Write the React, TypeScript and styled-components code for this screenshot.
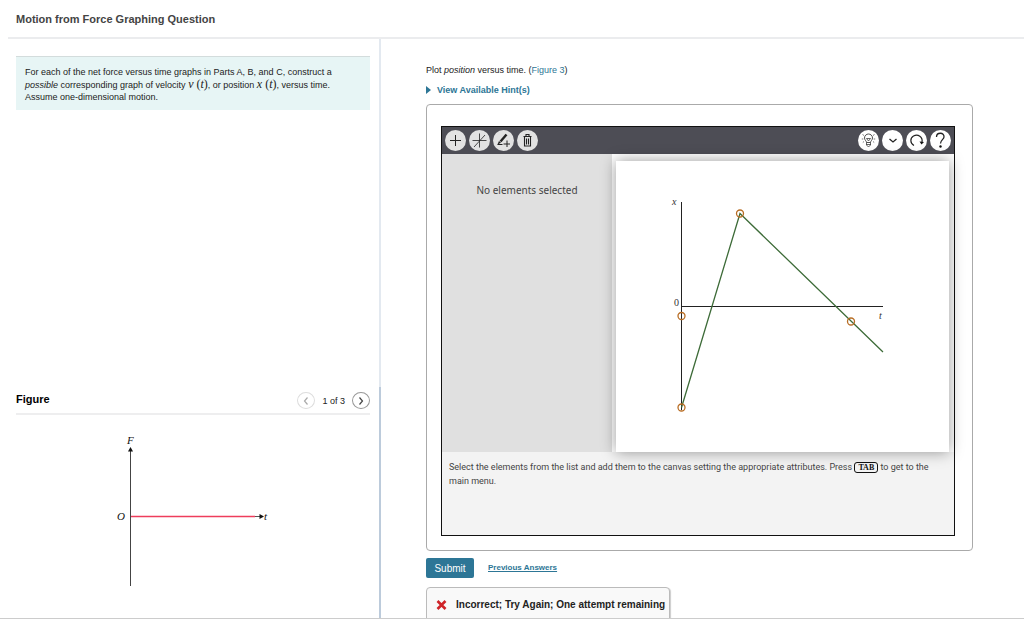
import React from "react";
import styled, { createGlobalStyle, css } from "styled-components";

const GlobalStyle = createGlobalStyle`
  *, *::before, *::after { box-sizing: border-box; }
  body {
    margin: 0;
    background: #fff;
    color: #222;
    font-family: "Liberation Sans", Arial, sans-serif;
    font-size: 9px;
    line-height: 12px;
  }
  button { font-family: inherit; padding: 0; cursor: pointer; }
  h1, h2, p { margin: 0; }
`;

const teal = "#2d7696";

const Page = styled.div`
  display: flex;
  flex-direction: column;
  height: 100vh;
  border-bottom: 1px solid #ccc;
`;

const Header = styled.header`
  flex: none;
  margin-left: 8px;
  padding: 13px 8px 11px;
  border-bottom: 2px solid #ebecee;
`;

const Title = styled.h1`
  color: #444;
  font-size: 11px;
  line-height: 13px;
`;

const Panes = styled.main`
  display: flex;
  flex: 1;
  min-height: 0;
`;

const scrollPane = css`
  overflow-y: auto;
  scrollbar-width: none;
`;

const LeftPane = styled.aside`
  ${scrollPane}
  display: flex;
  flex-direction: column;
  justify-content: space-between;
  flex: 0 0 381px;
  padding: 17px 9px 0 16px;
  border-right: 2px solid;
  border-image: linear-gradient(#e3e9f0 60%, #bccbdb 60%) 1;
`;

const Prompt = styled.p`
  padding: 9px 8px 7px 9px;
  border-top: 1px solid #d3dcdc;
  background: #e7f5f5;
`;

const TextLine = styled.span`
  display: block;
`;

const MathText = styled.span`
  font-family: "Liberation Serif", serif;
  font-size: 12px;
  line-height: 12px;
`;

const FigureSection = styled.section`
  display: flex;
  flex-direction: column;
`;

const FigureHeader = styled.div`
  display: flex;
  align-items: flex-start;
  justify-content: space-between;
  height: 24px;
  padding-top: 1px;
  border-bottom: 2px solid #eeeeef;
`;

const FigureTitle = styled.h2`
  color: #000;
  font-size: 11px;
  line-height: 14px;
`;

const Pager = styled.nav`
  display: flex;
  align-items: center;
  gap: 7px;
`;

const PagerButton = styled.button`
  display: grid;
  place-items: center;
  width: 18px;
  height: 17px;
  border: 1px solid #999;
  border-radius: 50%;
  background: #fff;
  color: #444;
  &:disabled { border-color: #ddd; color: #aaa; }
`;

const FigureDrawing = styled.svg`
  display: block;
  width: 354px;
  height: 203px;
`;

const RightPane = styled.section`
  ${scrollPane}
  flex: 1;
  min-width: 0;
  padding: 25px 51px 0 45px;
`;

const Link = styled.a`
  color: ${teal};
  text-decoration: none;
`;

const HintButton = styled.button`
  display: flex;
  align-items: center;
  gap: 6px;
  height: 12px;
  margin: 8px 0;
  border: 0;
  background: none;
  color: ${teal};
  font-size: 9px;
  font-weight: bold;
`;

const AnswerFrame = styled.div`
  padding: 21px 17px 14px 14px;
  border: 1px solid #aaa;
  border-radius: 4px;
`;

const Grapher = styled.div`
  border: 1px solid #111;
  background: #f3f3f3;
  color: #444;
`;

const Toolbar = styled.div`
  display: flex;
  justify-content: space-between;
  padding: 3px;
  background: #4d4d55;
`;

const ToolGroup = styled.div`
  display: flex;
  gap: 3px;
`;

const Tool = styled.button<{ $bright?: boolean }>`
  width: 21px;
  height: 21px;
  border: 0;
  border-radius: 50%;
  background: ${(p) => (p.$bright ? "#fff" : "#e2e2e2")};
  svg { display: block; width: 21px; height: 21px; }
`;

const Workspace = styled.div`
  display: flex;
  background: #fff;
`;

const Inspector = styled.div`
  flex: 0 0 170px;
  padding-top: 28px;
  background: #e0e0e0;
  font-family: "Noto Sans", sans-serif;
  font-size: 10px;
  line-height: 16px;
  text-align: center;
`;

const Canvas = styled.div`
  flex: 1;
  margin: 7px 5px 0 4px;
  background: #fff;
  box-shadow: 0 0 14px rgba(0, 0, 0, 0.4);
  svg { display: block; width: 333px; height: 291px; }
`;

const Instructions = styled.p`
  min-height: 83px;
  padding: 8px 7px;
  font-family: Roboto, sans-serif;
  font-size: 9px;
  line-height: 14px;
`;

const Key = styled.kbd`
  display: inline-block;
  padding: 0 3px;
  border: 1px solid #111;
  border-radius: 3px;
  color: #111;
  font-family: "Liberation Serif", serif;
  font-size: 8px;
  font-weight: bold;
  line-height: 9px;
`;

const Actions = styled.div`
  display: flex;
  align-items: center;
  gap: 14px;
  margin: 7px 0 9px;
  font-size: 8px;
  font-weight: bold;
  a { text-decoration: underline; }
`;

const Submit = styled.button`
  width: 48px;
  height: 20px;
  border: 0;
  border-radius: 2px;
  background: ${teal};
  color: #fff;
  font-size: 10px;
`;

const Feedback = styled.div`
  display: flex;
  align-items: center;
  gap: 9px;
  width: fit-content;
  height: 36px;
  padding: 0 4px 0 9px;
  border: 1px solid #bbb;
  border-radius: 4px;
  background: #f9f9f9;
  box-shadow: 1px 1px 1px #ccc;
  font-size: 10px;
  font-weight: bold;
`;

const stroke = { fill: "none", stroke: "#222", strokeWidth: 1 };

function Chevron({ left = false }: { left?: boolean }) {
  return (
    <svg width="8" height="10" viewBox="0 0 8 10" fill="none" stroke="currentColor" strokeWidth="1.2">
      <path d={left ? "M5.5 1.5 2.5 5l3 3.5" : "M2.5 1.5 5.5 5l-3 3.5"} />
    </svg>
  );
}

function ForceGraph() {
  return (
    <FigureDrawing viewBox="0 0 354 203" role="img" aria-label="Force versus time">
      <path d="M114.5 36V171" stroke="#444" fill="none" />
      <path d="M112 36.500 114.500 32 117 36.500Z" fill="#111" />
      <path d="M238 101.500H246" stroke="#555" />
      <path d="M243.500 99 248 101.500 243.500 104Z" fill="#111" />
      <path d="M115 101.500H239" stroke="#ee3d5c" strokeWidth="1.300" />
      <g fontFamily="Liberation Serif, serif" fontStyle="italic" fontSize="11" fill="#111">
        <text x="111" y="29">F</text>
        <text x="101" y="105">O</text>
        <text x="248" y="105">t</text>
      </g>
    </FigureDrawing>
  );
}

const points = [
  [65.500, 155],
  [65.500, 246.500],
  [124, 52.500],
  [235, 160.500],
];

function PositionGraph() {
  return (
    <svg viewBox="0 0 333 291" role="img" aria-label="Position versus time">
      <path d="M65.500 41V249M65 145.500H267" stroke="#222" fill="none" />
      <path d="M65.500 246.500 124 52.500 267 191" stroke="#3d6b38" strokeWidth="1.300" fill="none" />
      {points.map(([x, y]) => (
        <circle key={`${x}-${y}`} cx={x} cy={y} r="3.500" fill="none" stroke="#b86d24" strokeWidth="1.300" />
      ))}
      <g fontFamily="Liberation Serif, serif" fontSize="10" fill="#333">
        <text x="56" y="44" fontStyle="italic">x</text>
        <text x="58" y="145">0</text>
        <text x="263" y="158" fontStyle="italic">t</text>
      </g>
    </svg>
  );
}

const editTools = [
  { label: "Add element", art: <path d="M10.500 5V16M5 10.500H16" {...stroke} /> },
  { label: "Add tangent", art: <path d="M10.500 3.500V17.500M3.500 10.500H17.500M5 17 16 5" {...stroke} strokeWidth={0.8} /> },
  {
    label: "Add curve",
    art: (
      <>
        <path d="M4.500 14.500 6 11 8 12.800Z" fill="#222" />
        <path d="M7.500 11.500 13.500 4.500" {...stroke} strokeWidth={2.400} />
        <path d="M4.500 14.500H9.500M14 10.500V17M10.500 14H17" {...stroke} />
      </>
    ),
  },
  {
    label: "Delete",
    art: <path d="M6.500 6.500H14.500M9 6V4.500H12V6M7.500 7V16H13.500V7M9.500 8.500V14.500M11.500 8.500V14.500" {...stroke} strokeWidth={1.100} />,
  },
];

const helpTools = [
  {
    label: "Hint",
    art: (
      <>
        <path d="M8.500 12.500C8.500 11 6.500 10 6.500 8 6.500 5.500 8.500 4 10.500 4S14.500 5.500 14.500 8C14.500 10 12.500 11 12.500 12.500Z" {...stroke} strokeWidth={0.800} />
        <path d="M8.500 8.500H12.500L10.500 11 8.500 8.500M8.500 12.500V15L10.500 17 12.500 15V12.500M8.500 14.500H12.500" {...stroke} strokeWidth={0.700} />
        <path d="M4.500 4.500 6 5.500M16.500 4.500 15 5.500M3.800 9H5.300M17.200 9H15.700M4.800 12.500 6 11.500M16.200 12.500 15 11.500" {...stroke} strokeWidth={0.600} />
      </>
    ),
  },
  { label: "More options", art: <path d="M7.500 9 11 12 14.500 9" {...stroke} strokeWidth={1.300} /> },
  {
    label: "Reset",
    art: (
      <>
        <path d="M8 15.500C4 13.500 3.800 8 7.500 6 12 3.500 17 7 16 12" {...stroke} strokeWidth={1.200} />
        <path d="M13.500 11.500 18 12 15.500 14.500Z" fill="#111" />
      </>
    ),
  },
  {
    label: "Help",
    art: (
      <>
        <path d="M6.500 7C6.500 2 14.500 2 14 7 13.800 9.500 10.500 10 10.500 13.500" {...stroke} strokeWidth={1.300} />
        <circle cx="10.500" cy="16.500" r="1.200" fill="#111" />
      </>
    ),
  },
];

export default function App() {
  return (
    <>
      <GlobalStyle />
      <Page>
        <Header>
          <Title>Motion from Force Graphing Question</Title>
        </Header>
        <Panes>
          <LeftPane>
            <Prompt>
              <TextLine>
                For each of the net force versus time graphs in Parts A, B, and C, construct a
              </TextLine>
              <TextLine>
                <em>possible</em> corresponding graph of velocity{" "}
                <MathText><i>v</i> (<i>t</i>)</MathText>, or position{" "}
                <MathText><i>x</i> (<i>t</i>)</MathText>, versus time.
              </TextLine>
              <TextLine>Assume one-dimensional motion.</TextLine>
            </Prompt>
            <FigureSection>
              <FigureHeader>
                <FigureTitle>Figure</FigureTitle>
                <Pager aria-label="Figures">
                  <PagerButton aria-label="Previous figure" disabled><Chevron left /></PagerButton>
                  <span>1 of 3</span>
                  <PagerButton aria-label="Next figure"><Chevron /></PagerButton>
                </Pager>
              </FigureHeader>
              <ForceGraph />
            </FigureSection>
          </LeftPane>
          <RightPane>
            <p>
              Plot <em>position</em> versus time. (<Link href="#figure-3">Figure 3</Link>)
            </p>
            <HintButton>
              <svg width="5" height="8" viewBox="0 0 5 8"><path d="M0 0 5 4 0 8Z" fill={teal} /></svg>
              View Available Hint(s)
            </HintButton>
            <AnswerFrame>
              <Grapher>
                <Toolbar>
                  <ToolGroup>
                    {editTools.map((t) => (
                      <Tool key={t.label} aria-label={t.label}><svg viewBox="0 0 21 21">{t.art}</svg></Tool>
                    ))}
                  </ToolGroup>
                  <ToolGroup>
                    {helpTools.map((t) => (
                      <Tool key={t.label} aria-label={t.label} $bright><svg viewBox="0 0 21 21">{t.art}</svg></Tool>
                    ))}
                  </ToolGroup>
                </Toolbar>
                <Workspace>
                  <Inspector>No elements selected</Inspector>
                  <Canvas><PositionGraph /></Canvas>
                </Workspace>
                <Instructions>
                  <TextLine>
                    Select the elements from the list and add them to the canvas setting the appropriate
                    attributes. Press <Key>TAB</Key> to get to the
                  </TextLine>
                  <TextLine>main menu.</TextLine>
                </Instructions>
              </Grapher>
            </AnswerFrame>
            <Actions>
              <Submit>Submit</Submit>
              <Link href="#previous-answers">Previous Answers</Link>
            </Actions>
            <Feedback role="status">
              <svg width="11" height="10" viewBox="0 0 11 10" stroke="#cf2328" strokeWidth="2.600" fill="none">
                <path d="M1.500 1 9.500 9M9.500 1 1.500 9" />
              </svg>
              Incorrect; Try Again; One attempt remaining
            </Feedback>
          </RightPane>
        </Panes>
      </Page>
    </>
  );
}
